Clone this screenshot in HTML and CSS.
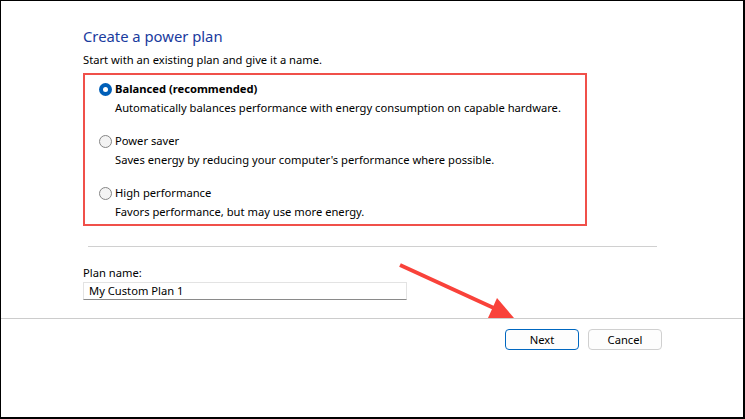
FILE: index.html
```html
<!DOCTYPE html>
<html lang="en">
<head>
<meta charset="utf-8">
<title>Create a power plan</title>
<link rel="stylesheet" href="styles.css">
</head>
<body>
<div class="frame">
  <div class="main">
    <h1 class="title">Create a power plan</h1>
    <p class="intro">Start with an existing plan and give it a name.</p>
    <div class="plans">
      <div class="option">
        <span class="radio checked"></span>
        <div class="opt-text">
          <div class="opt-label bold">Balanced (recommended)</div>
          <div class="opt-desc">Automatically balances performance with energy consumption on capable hardware.</div>
        </div>
      </div>
      <div class="option">
        <span class="radio"></span>
        <div class="opt-text">
          <div class="opt-label">Power saver</div>
          <div class="opt-desc">Saves energy by reducing your computer's performance where possible.</div>
        </div>
      </div>
      <div class="option">
        <span class="radio"></span>
        <div class="opt-text">
          <div class="opt-label">High performance</div>
          <div class="opt-desc">Favors performance, but may use more energy.</div>
        </div>
      </div>
    </div>
    <div class="divider"></div>
    <label class="name-label">Plan name:</label>
    <div class="name-input">My Custom Plan 1</div>
  </div>
  <div class="footer">
    <button class="btn primary">Next</button>
    <button class="btn">Cancel</button>
  </div>
  <svg class="arrow" width="745" height="419" viewBox="0 0 745 419">
    <line x1="400" y1="265" x2="496" y2="309" stroke="#f9423a" stroke-width="4" stroke-linecap="butt"/>
    <polygon points="497,298 488,318 514,318" fill="#f9423a"/>
  </svg>
</div>
</body>
</html>
```

FILE: styles.css
```css
html, body {
  margin: 0;
  padding: 0;
  background: #ffffff;
}

body {
  font-family: "Noto Sans", "Open Sans", sans-serif;
  font-size: 11.2px;
  color: #000000;
  white-space: nowrap;
}

.frame {
  position: relative;
  width: 745px;
  height: 419px;
  box-sizing: border-box;
  border-top: 1px solid #000;
  border-left: 1px solid #000;
  border-right: 2px solid #000;
  border-bottom: 2px solid #000;
  display: flex;
  flex-direction: column;
  overflow: hidden;
}

.main {
  padding-left: 82px;
  display: flex;
  flex-direction: column;
  align-items: flex-start;
}

.title {
  margin: 24px 0 0 0;
  font-size: 14.8px;
  font-weight: normal;
  line-height: 22px;
  color: #1a3b9e;
}

.intro {
  margin: 5px 0 0 0;
  line-height: 16px;
}

.plans {
  margin-top: 5px;
  width: 486px;
  border: 2px solid #f0504a;
  padding: 6px 0 4px 14px;
  display: flex;
  flex-direction: column;
  gap: 17px;
}

.option {
  display: flex;
  align-items: flex-start;
  gap: 3px;
}

.radio {
  width: 13px;
  height: 13px;
  margin-top: 2px;
  box-sizing: border-box;
  border-radius: 50%;
  border: 1px solid #858585;
  background: #f3f3f3;
  flex: none;
  display: flex;
  align-items: center;
  justify-content: center;
}

.radio.checked {
  border: none;
  background: #005fb8;
}

.radio.checked::after {
  content: "";
  width: 5px;
  height: 5px;
  border-radius: 50%;
  background: #ffffff;
}

.opt-text {
  display: flex;
  flex-direction: column;
  gap: 3px;
}

.opt-label,
.opt-desc {
  line-height: 16px;
}

.bold {
  font-weight: bold;
}

.divider {
  margin: 20px 0 0 5px;
  width: 569px;
  height: 1px;
  background: #d0d0d0;
}

.name-label {
  margin-top: 18px;
  line-height: 16px;
}

.name-input {
  margin-top: 1px;
  width: 324px;
  height: 18px;
  box-sizing: border-box;
  border: 1px solid #e3e3e3;
  border-bottom: 1px solid #8a8a8a;
  padding-left: 5px;
  line-height: 16px;
}

.footer {
  margin-top: 18px;
  border-top: 1px solid #cccccc;
  padding: 10px 81px 0 0;
  display: flex;
  justify-content: flex-end;
  gap: 9px;
}

.btn {
  width: 74px;
  height: 21px;
  padding: 0;
  font-family: inherit;
  font-size: 11.2px;
  color: #000;
  background: #fdfdfd;
  border: 1px solid #d0d0d0;
  border-radius: 4px;
  line-height: 17px;
}

.btn.primary {
  border-color: #0067c0;
}

.arrow {
  position: absolute;
  left: -1px;
  top: -1px;
  pointer-events: none;
}
```
